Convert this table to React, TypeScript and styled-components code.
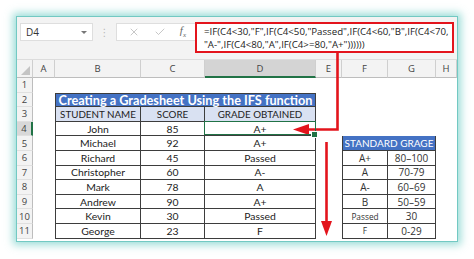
import React from 'react';
import styled, { createGlobalStyle } from 'styled-components';
import { X, Check } from 'lucide-react';

const GlobalStyle = createGlobalStyle`
  html, body {
    margin: 0;
    padding: 0;
    background: #ffffff;
  }
  * {
    box-sizing: border-box;
  }
`;

const students: [string, number, string][] = [
  ['John', 85, 'A+'],
  ['Michael', 92, 'A+'],
  ['Richard', 45, 'Passed'],
  ['Christopher', 60, 'A-'],
  ['Mark', 78, 'A'],
  ['Andrew', 90, 'A+'],
  ['Kevin', 30, 'Passed'],
  ['George', 23, 'F'],
];

const standard: [string, string][] = [
  ['A+', '80–100'],
  ['A', '70-79'],
  ['A-', '60–69'],
  ['B', '50–59'],
  ['Passed', '30'],
  ['F', '0-29'],
];

const columns = ['A', 'B', 'C', 'D', 'E', 'F', 'G', 'H'];

export default function App() {
  const rows = [];
  for (let r = 1; r <= 11; r++) {
    const cells: React.ReactNode[] = [];
    cells.push(
      <RowHead key="rh" $selected={r === 4}>
        {r}
      </RowHead>
    );
    cells.push(<Cell key="a" />);

    // main table B..D
    if (r === 1) {
      cells.push(<Cell key="b" />, <Cell key="c" />, <Cell key="d" />);
    } else if (r === 2) {
      cells.push(
        <TitleCell key="t" $span={3}>
          Creating a Gradesheet Using the IFS function
        </TitleCell>
      );
    } else if (r === 3) {
      cells.push(
        <HeadCell key="b" $left>
          STUDENT NAME
        </HeadCell>,
        <HeadCell key="c">SCORE</HeadCell>,
        <HeadCell key="d">GRADE OBTAINED</HeadCell>
      );
    } else {
      const [name, score, grade] = students[r - 4];
      cells.push(
        <DataCell key="b" $left>
          {name}
        </DataCell>,
        <DataCell key="c">{score}</DataCell>,
        <DataCell key="d" $active={r === 4}>
          {grade}
        </DataCell>
      );
    }

    cells.push(<Cell key="e" />);

    // standard grade table F..G
    if (r < 5) {
      cells.push(<Cell key="f" />, <Cell key="g" />);
    } else if (r === 5) {
      cells.push(
        <StdHead key="sh" $span={2}>
          STANDARD GRAGE
        </StdHead>
      );
    } else {
      const [grade, range] = standard[r - 6];
      const small = grade === 'Passed' || grade === 'F';
      cells.push(
        <StdCell key="f" $left $small={small}>
          {grade}
        </StdCell>,
        <StdCell key="g">{range}</StdCell>
      );
    }

    cells.push(<Cell key="h" />);
    rows.push(<React.Fragment key={r}>{cells}</React.Fragment>);
  }

  return (
    <Page>
      <GlobalStyle />
      <Window>
        <FormulaBar>
          <NameBox>
            <span>D4</span>
            <Caret />
          </NameBox>
          <Grip>⋮</Grip>
          <FxButtons>
            <X size={12} strokeWidth={1.3} color="#a8a8a8" />
            <Check size={12} strokeWidth={1.3} color="#a8a8a8" />
            <Fx>
              f<sub>x</sub>
            </Fx>
          </FxButtons>
          <FormulaBox>
            <FormulaLine>=IF(C4&lt;30,"F",IF(C4&lt;50,"Passed",IF(C4&lt;60,"B",IF(C4&lt;70,</FormulaLine>
            <FormulaLine>"A-",IF(C4&lt;80,"A",IF(C4&gt;=80,"A+"))))))</FormulaLine>
          </FormulaBox>
        </FormulaBar>

        <Sheet>
          <Corner>
            <CornerMark />
          </Corner>
          {columns.map((c) => (
            <ColHead key={c} $selected={c === 'D'}>
              {c}
            </ColHead>
          ))}
          {rows}
        </Sheet>
      </Window>

      <Arrows width="474" height="259" viewBox="0 0 474 259">
        <path d="M337.5 53 V129.5 H308" stroke="#e3141c" strokeWidth="2.6" fill="none" />
        <polygon points="293,129.5 309,124 309,135" fill="#e3141c" />
        <path d="M326.5 142 V223" stroke="#e3141c" strokeWidth="2.6" fill="none" />
        <polygon points="326.5,236 321,221 332,221" fill="#e3141c" />
      </Arrows>
    </Page>
  );
}

const Page = styled.div`
  position: relative;
  width: 474px;
  height: 259px;
  padding: 16px 16px 0 16px;
  background: #ffffff;
  overflow: hidden;
`;

const Window = styled.div`
  width: 442px;
  height: 226px;
  display: flex;
  flex-direction: column;
  border: 1px solid #72c9c3;
  background: #ffffff;
  box-shadow: 0 0 8px 3px rgba(115, 206, 200, 0.7);
  overflow: hidden;
`;

const FormulaBar = styled.div`
  height: 43px;
  display: flex;
  align-items: flex-start;
  padding: 5px 3px 0 3px;
  background: #f3f3f3;
  border-bottom: 1px solid #dcdcdc;
`;

const NameBox = styled.div`
  width: 73px;
  height: 18px;
  margin-top: 1px;
  display: flex;
  align-items: center;
  justify-content: space-between;
  padding: 0 5px 0 5px;
  background: #ffffff;
  border: 1px solid #dedede;
  font-family: 'Open Sans', sans-serif;
  font-size: 10px;
  color: #333;
`;

const Caret = styled.span`
  width: 0;
  height: 0;
  border-left: 3px solid transparent;
  border-right: 3px solid transparent;
  border-top: 3px solid #777;
`;

const Grip = styled.div`
  width: 23px;
  height: 18px;
  margin-top: 1px;
  display: flex;
  align-items: center;
  justify-content: center;
  font-family: 'DejaVu Sans', sans-serif;
  font-size: 10px;
  color: #b8b8b8;
`;

const FxButtons = styled.div`
  width: 79px;
  height: 18px;
  margin-top: 1px;
  display: flex;
  align-items: center;
  justify-content: space-around;
  padding: 0 2px 0 4px;
  background: #ffffff;
  border: 1px solid #dedede;
  border-right: none;
`;

const Fx = styled.span`
  font-family: 'Liberation Serif', serif;
  font-style: italic;
  font-size: 11px;
  color: #666;
  sub {
    font-size: 7px;
  }
`;

const FormulaBox = styled.div`
  width: 259px;
  height: 31px;
  display: flex;
  flex-direction: column;
  justify-content: center;
  padding: 0 0 0 7px;
  background: #ffffff;
  border: 2.5px solid #e3141c;
`;

const FormulaLine = styled.div`
  font-family: 'Open Sans', sans-serif;
  font-size: 9.7px;
  line-height: 13px;
  color: #222;
  white-space: pre;
`;

const Sheet = styled.div`
  flex: 1;
  display: grid;
  grid-template-columns: 16px 22px 86px 64px 111px 26px 46px 48px 1fr;
  grid-template-rows: 18px repeat(11, 14.6px);
  font-family: 'Lato', sans-serif;
  background: #ffffff;
`;

const Corner = styled.div`
  position: relative;
  background: #f3f3f3;
  border-right: 1px solid #cfcfcf;
  border-bottom: 1px solid #bdbdbd;
`;

const CornerMark = styled.span`
  position: absolute;
  right: 2px;
  bottom: 2px;
  width: 0;
  height: 0;
  border-left: 9px solid transparent;
  border-bottom: 9px solid #c4c4c4;
`;

const ColHead = styled.div<{ $selected?: boolean }>`
  display: flex;
  align-items: center;
  justify-content: center;
  background: ${(p) => (p.$selected ? '#d4d4d4' : '#f3f3f3')};
  border-right: 1px solid #cfcfcf;
  border-bottom: ${(p) => (p.$selected ? '2px solid #217346' : '1px solid #bdbdbd')};
  font-family: 'Open Sans', sans-serif;
  font-size: 9.5px;
  color: #444;
`;

const RowHead = styled.div<{ $selected?: boolean }>`
  display: flex;
  align-items: center;
  justify-content: center;
  background: ${(p) => (p.$selected ? '#d8d8d8' : '#f3f3f3')};
  border-right: ${(p) => (p.$selected ? '2px solid #217346' : '1px solid #bdbdbd')};
  border-bottom: 1px solid #e0e0e0;
  font-family: 'Open Sans', sans-serif;
  font-size: 9.5px;
  color: #444;
`;

const Cell = styled.div``;

const Boxed = styled.div<{ $left?: boolean; $span?: number }>`
  display: flex;
  align-items: center;
  justify-content: center;
  grid-column: span ${(p) => p.$span ?? 1};
  border-right: 1px solid #3d3d3d;
  border-bottom: 1px solid #3d3d3d;
  border-left: ${(p) => (p.$left ? '1px solid #3d3d3d' : 'none')};
  white-space: nowrap;
  overflow: visible;
`;

const TitleCell = styled(Boxed)`
  border-left: 1px solid #3d3d3d;
  border-top: 1px solid #3d3d3d;
  background: #4472c4;
  color: #ffffff;
  font-weight: 700;
  font-size: 12.7px;
`;

const HeadCell = styled(Boxed)`
  background: #d9e1f2;
  color: #222;
  font-size: 9.8px;
`;

const DataCell = styled(Boxed)<{ $active?: boolean }>`
  position: relative;
  color: #222;
  font-size: 10.4px;

  ${(p) =>
    p.$active &&
    `
    z-index: 2;
    &::after {
      content: '';
      position: absolute;
      inset: -1px -1px 0 -1px;
      border: 1.5px solid #217346;
    }
    &::before {
      content: '';
      position: absolute;
      right: -3px;
      bottom: -3px;
      width: 5px;
      height: 5px;
      background: #217346;
      border: 1px solid #ffffff;
      z-index: 1;
    }
  `}
`;

const StdHead = styled(Boxed)`
  border-left: 1px solid #3d3d3d;
  background: #4472c4;
  color: #ffffff;
  font-size: 10px;
`;

const StdCell = styled(Boxed)<{ $small?: boolean }>`
  font-family: 'Open Sans', sans-serif;
  font-size: ${(p) => (p.$small ? '8.3px' : '10px')};
  color: #333;
`;

const Arrows = styled.svg`
  position: absolute;
  left: 0;
  top: 0;
  pointer-events: none;
`;
